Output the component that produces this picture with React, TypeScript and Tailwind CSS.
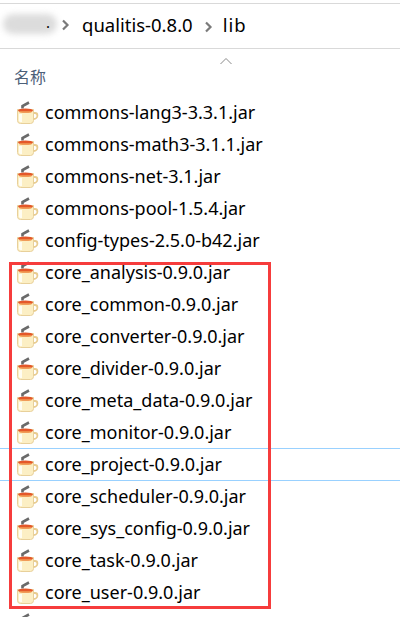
const FILES = [
  "commons-lang3-3.3.1.jar",
  "commons-math3-3.1.1.jar",
  "commons-net-3.1.jar",
  "commons-pool-1.5.4.jar",
  "config-types-2.5.0-b42.jar",
  "core_analysis-0.9.0.jar",
  "core_common-0.9.0.jar",
  "core_converter-0.9.0.jar",
  "core_divider-0.9.0.jar",
  "core_meta_data-0.9.0.jar",
  "core_monitor-0.9.0.jar",
  "core_project-0.9.0.jar",
  "core_scheduler-0.9.0.jar",
  "core_sys_config-0.9.0.jar",
  "core_task-0.9.0.jar",
  "core_user-0.9.0.jar",
  "",
];

function JarIcon() {
  return (
    <svg width="24" height="24" viewBox="0 0 24 24" className="shrink-0">
      <path d="M7.5 8.5 L7.5 6 L14 2.5" fill="none" stroke="#6a6a6a" strokeWidth="2.6" />
      <path d="M18 13h2a2.4 2.4 0 0 1 2.4 2.4v0a3.6 3.6 0 0 1-3.6 3.6H17.5" fill="none" stroke="#e8cc90" strokeWidth="1.8" />
      <path d="M2.5 9.5h16v11a3 3 0 0 1-3 3h-10a3 3 0 0 1-3-3z" fill="#fcefc4" stroke="#e8d09a" strokeWidth="1" />
      <path d="M4 14h3v8h-1.5a1.5 1.5 0 0 1-1.5-1.5z" fill="#fffdf2" />
      <ellipse cx="10.5" cy="10.6" rx="7.5" ry="2.2" fill="#e4582a" />
      <path d="M4.5 12h12" stroke="#f5b060" strokeWidth="1.2" />
    </svg>
  );
}

export default function App() {
  return (
    <div className="relative h-[617px] w-[400px] overflow-hidden bg-white font-['Noto_Sans','Open_Sans',sans-serif] text-black">
      <div className="mt-[3px] flex h-[46px] items-center border-y border-[#d9d9d9] pl-[1px] pb-[2px] text-[18.5px]">
        <div className="relative h-[36px] w-[60px] shrink-0">
          <div className="absolute left-[2px] top-[7px] h-[20px] w-[54px] rounded-full bg-[#dcdcdc] blur-[3px]" />
          <span className="absolute left-[45px] top-[4px] text-[15px]">.</span>
        </div>
        <Chevron />
        <span className="ml-[12px]">qualitis-0.8.0</span>
        <span className="ml-[11px]">
          <Chevron />
        </span>
        <span className="ml-[10px] tracking-[1px]">lib</span>
      </div>

      <div className="relative h-[48px]">
        <svg width="14" height="8" viewBox="0 0 14 8" className="absolute left-[219px] top-[8px]">
          <path d="M1.5 7 L7 1.5 L12.5 7" fill="none" stroke="#8a8a8a" strokeWidth="1" />
        </svg>
        <span className="absolute left-[14px] top-[15px] font-['Noto_Sans_CJK_SC',sans-serif] text-[16px] leading-[24px] text-[#4c6079]">名称</span>
      </div>

      <div className="flex flex-col">
        {FILES.map((name, i) => (
          <div
            key={i}
            className={`flex h-[32px] shrink-0 items-center gap-[5px] pl-[15px] pb-[2px] text-[18px] ${
              name === "core_project-0.9.0.jar" ? "shadow-[0_-1px_0_#99d1ff,inset_0_-1px_0_#99d1ff]" : ""
            }`}
          >
            <JarIcon />
            <span className="ml-[1px]">{name}</span>
          </div>
        ))}
      </div>

      <div className="pointer-events-none absolute left-[9px] top-[262px] h-[347px] w-[262px] border-[3px] border-[#f63c3c]" />
    </div>
  );
}

function Chevron() {
  return (
    <svg width="9" height="12" viewBox="0 0 9 12" className="inline-block shrink-0">
      <path d="M2 1.5 L6.5 6 L2 10.5" fill="none" stroke="#7a7a7a" strokeWidth="2.2" />
    </svg>
  );
}
